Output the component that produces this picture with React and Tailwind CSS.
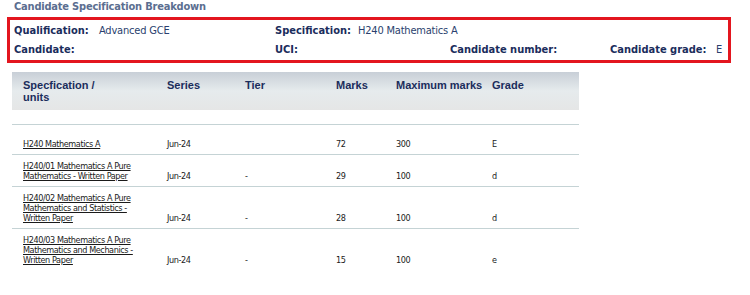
const rows = [
  { unit: ["H240 Mathematics A"], series: "Jun-24", tier: "", marks: "72", max: "300", grade: "E" },
  { unit: ["H240/01 Mathematics A Pure", "Mathematics - Written Paper"], series: "Jun-24", tier: "-", marks: "29", max: "100", grade: "d" },
  { unit: ["H240/02 Mathematics A Pure", "Mathematics and Statistics -", "Written Paper"], series: "Jun-24", tier: "-", marks: "28", max: "100", grade: "d" },
  { unit: ["H240/03 Mathematics A Pure", "Mathematics and Mechanics -", "Written Paper"], series: "Jun-24", tier: "-", marks: "15", max: "100", grade: "e" },
];

const tahoma = "font-['DejaVu_Sans_Condensed','DejaVu_Sans',sans-serif]";

function Label({ children }) {
  return <span className="font-bold text-[#1b2d5c] whitespace-nowrap">{children}</span>;
}

function Value({ children }) {
  return <span className="text-[#2a3f6e] whitespace-nowrap tracking-[-0.2px]">{children}</span>;
}

export default function App() {
  return (
    <div className={`w-[750px] h-[295px] bg-white ${tahoma} text-[11px] overflow-hidden`}>
      <h2 className="pl-[14px] pt-[1px] h-[17px] leading-[12px] font-bold text-[11px] tracking-[-0.2px] text-[#5b6e90]">
        Candidate Specification Breakdown
      </h2>

      <div className="ml-[7px] w-[724px] h-[46px] border-[3px] border-[#e3161f] pl-[4px] pt-[1px]">
        <div className="grid grid-cols-[85px_176px_83px_92px_160px_106px_1fr] leading-[19px]">
          <Label>Qualification:</Label>
          <Value>Advanced GCE</Value>
          <Label>Specification:</Label>
          <div className="col-span-4"><Value>H240 Mathematics A</Value></div>
          <Label>Candidate:</Label>
          <span />
          <Label>UCI:</Label>
          <span />
          <Label>Candidate number:</Label>
          <Label>Candidate grade:</Label>
          <Value>E</Value>
        </div>
      </div>

      <table className="mt-[9px] ml-[12px] w-[567px] border-collapse table-fixed">
        <colgroup>
          <col className="w-[144px]" />
          <col className="w-[78px]" />
          <col className="w-[91px]" />
          <col className="w-[60px]" />
          <col className="w-[96px]" />
          <col className="w-[98px]" />
        </colgroup>
        <thead>
          <tr className="h-[38px] bg-gradient-to-b from-[#c8cfd7] via-[#e6ebed] to-[#e5e6e6] font-['Liberation_Sans',Arial,sans-serif] font-bold text-[11px] text-[#1b2d5c] leading-[12px]">
            <th className="text-left align-top pl-[11px] pt-[7px] font-bold">Specfication /<br />units</th>
            <th className="text-left align-top pl-[11px] pt-[7px] font-bold">Series</th>
            <th className="text-left align-top pl-[11px] pt-[7px] font-bold">Tier</th>
            <th className="text-left align-top pl-[11px] pt-[7px] font-bold">Marks</th>
            <th className="text-left align-top pl-[11px] pt-[7px] font-bold whitespace-nowrap">Maximum marks</th>
            <th className="text-left align-top pl-[11px] pt-[7px] font-bold">Grade</th>
          </tr>
        </thead>
        <tbody className="text-[9px] leading-[10px] tracking-[-0.4px] text-[#1a1a1a]">
          <tr className="h-[14px] border-b border-[#c5d3d5]">
            <td colSpan={6} />
          </tr>
          {rows.map((r, i) => (
            <tr key={i} className={`h-[30px] ${i < rows.length - 1 ? "border-b border-[#c5d3d5]" : ""}`}>
              <td className="align-bottom pl-[11px] pt-[6px] pb-[5px]">
                <a href="#" className="underline">
                  {r.unit.map((line, j) => (
                    <span key={j} className="block whitespace-nowrap">{line}</span>
                  ))}
                </a>
              </td>
              <td className="align-bottom pl-[11px] pb-[5px]">{r.series}</td>
              <td className="align-bottom pl-[11px] pb-[5px]">{r.tier}</td>
              <td className="align-bottom pl-[11px] pb-[5px]">{r.marks}</td>
              <td className="align-bottom pl-[11px] pb-[5px]">{r.max}</td>
              <td className="align-bottom pl-[11px] pb-[5px]">{r.grade}</td>
            </tr>
          ))}
        </tbody>
      </table>
    </div>
  );
}
